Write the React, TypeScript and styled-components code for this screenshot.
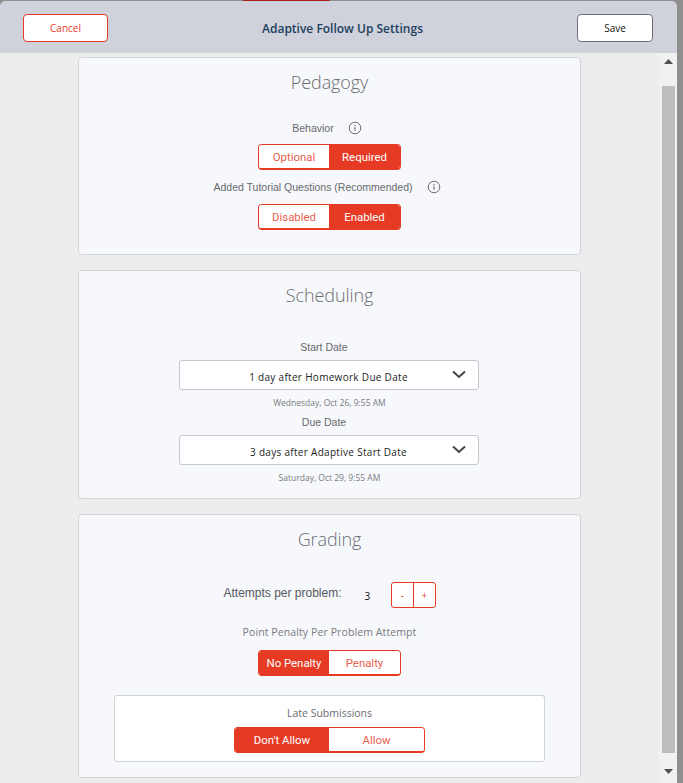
import React from "react";
import styled, { createGlobalStyle } from "styled-components";

const GlobalStyle = createGlobalStyle`
  html, body {
    margin: 0;
    padding: 0;
    height: 783px;
    overflow: hidden;
    background: #8f8f8f;
    font-family: "Liberation Sans", Arial, sans-serif;
  }
`;

const RED = "#e73a25";

const TopStrip = styled.div`
  height: 1px;
  padding-left: 243px;
`;

const StripMark = styled.div`
  width: 87px;
  height: 1px;
  background: #a8201a;
`;

const Modal = styled.div`
  width: 677px;
  height: 782px;
  border-radius: 6px 6px 0 0;
  overflow: hidden;
  display: flex;
  flex-direction: column;
  background: #ededed;
`;

const Header = styled.header`
  flex: none;
  height: 52px;
  box-sizing: border-box;
  background: #cfd2db;
  display: flex;
  align-items: center;
  justify-content: space-between;
  padding: 2px 24px 0 18px;
`;

const Title = styled.h1`
  margin: 0;
  font-family: "Open Sans", sans-serif;
  font-size: 12px;
  font-weight: 600;
  color: #22405f;
`;

const HeaderButton = styled.button<{ $danger?: boolean }>`
  height: 28px;
  box-sizing: border-box;
  width: ${(p) => (p.$danger ? "85px" : "76px")};
  margin-left: ${(p) => (p.$danger ? "5px" : "0")};
  background: #fff;
  border: 1px solid ${(p) => (p.$danger ? RED : "#6f6f78")};
  border-radius: 4px;
  color: ${(p) => (p.$danger ? RED : "#111")};
  font-family: "Open Sans", sans-serif;
  font-size: 10px;
  padding: 0;
`;

const Body = styled.div`
  flex: 1;
  display: flex;
  min-height: 0;
`;

const Content = styled.main`
  flex: 1;
  box-sizing: border-box;
  padding: 4px 0 0 78px;
  display: flex;
  flex-direction: column;
  gap: 15px;
`;

const Card = styled.section<{ $height: number }>`
  width: 503px;
  height: ${(p) => p.$height}px;
  box-sizing: border-box;
  background: #f7f8fb;
  border: 1px solid #cfd3da;
  border-radius: 4px;
  display: flex;
  flex-direction: column;
  align-items: center;
`;

const CardTitle = styled.h2`
  margin: 13px 0 0;
  height: 22px;
  line-height: 22px;
  font-family: "Open Sans", sans-serif;
  font-size: 18px;
  font-weight: 300;
  letter-spacing: -0.1px;
  color: #6b6e73;
`;

const LabelRow = styled.div<{ $top: number; $shift?: number }>`
  margin-top: ${(p) => p.$top}px;
  margin-left: ${(p) => p.$shift ?? 0}px;
  display: flex;
  align-items: center;
  gap: 14px;
  height: 14px;
`;

const FieldLabel = styled.span`
  font-family: "Liberation Sans", Arial, sans-serif;
  font-size: 10.5px;
  color: #66696e;
`;

const InfoIcon = () => (
  <svg width="14" height="14" viewBox="0 0 14 14" fill="none" stroke="#6d6f73" strokeWidth="1">
    <circle cx="7" cy="7" r="5.8" />
    <path d="M7 6.2v3.6" strokeWidth="1.2" />
    <path d="M7 4v1.2" strokeWidth="1.2" />
  </svg>
);

const Toggle = styled.div<{ $top: number; $wide?: boolean }>`
  margin-top: ${(p) => p.$top}px;
  width: ${(p) => (p.$wide ? "191px" : "143px")};
  height: 26px;
  box-sizing: border-box;
  border: 1px solid ${RED};
  border-bottom-width: 2px;
  border-radius: 4px;
  overflow: hidden;
  display: grid;
  grid-template-columns: ${(p) => (p.$wide ? "94px 1fr" : "70px 1fr")};
  background: #fff;
`;

const ToggleOption = styled.div<{ $active?: boolean }>`
  display: flex;
  align-items: center;
  justify-content: center;
  background: ${(p) => (p.$active ? RED : "#fff")};
  color: ${(p) => (p.$active ? "#fff" : "#e8604f")};
  font-family: Roboto, sans-serif;
  font-size: 11.4px;
`;

const SelectBox = styled.div<{ $top: number }>`
  margin-top: ${(p) => p.$top}px;
  margin-right: 2px;
  width: 300px;
  height: 30px;
  box-sizing: border-box;
  background: #fff;
  border: 1px solid #c4c8d0;
  border-radius: 3px;
  position: relative;
  display: flex;
  align-items: center;
  justify-content: center;
  padding: 4px 0 0 0;
  font-family: "Open Sans", sans-serif;
  font-size: 10px;
  letter-spacing: 0.3px;
  color: #1c1c1c;
`;

const Chevron = styled.svg`
  position: absolute;
  right: 12px;
  top: 9px;
`;

const DateHint = styled.div`
  margin-top: 6px;
  height: 14px;
  line-height: 14px;
  font-family: "Open Sans", sans-serif;
  font-size: 8.5px;
  color: #777a80;
`;

const AttemptsRow = styled.div`
  margin-top: 32px;
  display: flex;
  align-items: center;
  height: 26px;
`;

const AttemptsLabel = styled.span`
  font-family: "Liberation Sans", Arial, sans-serif;
  font-size: 12px;
  color: #54585f;
  margin-bottom: 5px;
`;

const AttemptsValue = styled.span`
  margin: 2px 0 0 23px;
  width: 26px;
  font-family: "Open Sans", sans-serif;
  font-size: 10px;
  color: #111;
`;

const Stepper = styled.div`
  width: 45px;
  height: 26px;
  box-sizing: border-box;
  border: 1px solid ${RED};
  border-radius: 3px;
  display: grid;
  grid-template-columns: 1fr 1fr;
  background: #fff;
`;

const StepButton = styled.div`
  display: flex;
  align-items: center;
  justify-content: center;
  color: ${RED};
  font-family: "Open Sans", sans-serif;
  font-size: 10px;
  & + & {
    border-left: 1px solid ${RED};
  }
`;

const PenaltyLabel = styled.div`
  margin-top: 16px;
  height: 16px;
  line-height: 16px;
  font-family: "Open Sans", sans-serif;
  font-size: 10.5px;
  letter-spacing: 0.1px;
  color: #777a80;
`;

const LatePanel = styled.div`
  margin-top: 19px;
  width: 431px;
  height: 67px;
  box-sizing: border-box;
  background: #fff;
  border: 1px solid #cfd3da;
  border-radius: 3px;
  display: flex;
  flex-direction: column;
  align-items: center;
`;

const LateTitle = styled.div`
  margin-top: 10px;
  height: 14px;
  line-height: 14px;
  font-family: "Open Sans", sans-serif;
  font-size: 10.5px;
  color: #6a6d73;
`;

const Scrollbar = styled.aside`
  flex: none;
  width: 18px;
  background: #f1f1f1;
  display: flex;
  flex-direction: column;
  align-items: center;
  box-sizing: border-box;
  padding-top: 6px;
`;

const ArrowButton = styled.svg`
  flex: none;
  display: block;
`;

const ScrollThumb = styled.div`
  width: 13px;
  height: 667px;
  margin: 22px 0 16px;
  background: #bdbdbd;
`;

const App: React.FC = () => {
  return (
    <>
      <GlobalStyle />
      <TopStrip>
        <StripMark />
      </TopStrip>
      <Modal>
        <Header>
          <HeaderButton $danger>Cancel</HeaderButton>
          <Title>Adaptive Follow Up Settings</Title>
          <HeaderButton>Save</HeaderButton>
        </Header>
        <Body>
          <Content>
            <Card $height={198}>
              <CardTitle>Pedagogy</CardTitle>
              <LabelRow $top={28} $shift={-5}>
                <FieldLabel>Behavior</FieldLabel>
                <InfoIcon />
              </LabelRow>
              <Toggle $top={9}>
                <ToggleOption>Optional</ToggleOption>
                <ToggleOption $active>Required</ToggleOption>
              </Toggle>
              <LabelRow $top={10} $shift={-5}>
                <FieldLabel>Added Tutorial Questions (Recommended)</FieldLabel>
                <InfoIcon />
              </LabelRow>
              <Toggle $top={10}>
                <ToggleOption>Disabled</ToggleOption>
                <ToggleOption $active>Enabled</ToggleOption>
              </Toggle>
            </Card>
            <Card $height={229}>
              <CardTitle>Scheduling</CardTitle>
              <LabelRow $top={34} $shift={-11}>
                <FieldLabel>Start Date</FieldLabel>
              </LabelRow>
              <SelectBox $top={6}>
                1 day after Homework Due Date
                <Chevron width="14" height="9" viewBox="0 0 14 9" fill="none" stroke="#444" strokeWidth="2">
                  <path d="M1 1.5l6 5.5 6-5.5" />
                </Chevron>
              </SelectBox>
              <DateHint>Wednesday, Oct 26, 9:55 AM</DateHint>
              <LabelRow $top={5} $shift={-11}>
                <FieldLabel>Due Date</FieldLabel>
              </LabelRow>
              <SelectBox $top={6}>
                3 days after Adaptive Start Date
                <Chevron width="14" height="9" viewBox="0 0 14 9" fill="none" stroke="#444" strokeWidth="2">
                  <path d="M1 1.5l6 5.5 6-5.5" />
                </Chevron>
              </SelectBox>
              <DateHint>Saturday, Oct 29, 9:55 AM</DateHint>
            </Card>
            <Card $height={264}>
              <CardTitle>Grading</CardTitle>
              <AttemptsRow>
                <AttemptsLabel>Attempts per problem:</AttemptsLabel>
                <AttemptsValue>3</AttemptsValue>
                <Stepper>
                  <StepButton>-</StepButton>
                  <StepButton>+</StepButton>
                </Stepper>
              </AttemptsRow>
              <PenaltyLabel>Point Penalty Per Problem Attempt</PenaltyLabel>
              <Toggle $top={10}>
                <ToggleOption $active>No Penalty</ToggleOption>
                <ToggleOption>Penalty</ToggleOption>
              </Toggle>
              <LatePanel>
                <LateTitle>Late Submissions</LateTitle>
                <Toggle $top={7} $wide>
                  <ToggleOption $active>Don't Allow</ToggleOption>
                  <ToggleOption>Allow</ToggleOption>
                </Toggle>
              </LatePanel>
            </Card>
          </Content>
          <Scrollbar>
            <ArrowButton width="9" height="5" viewBox="0 0 9 5" fill="#505050">
              <path d="M4.5 0L9 5H0z" />
            </ArrowButton>
            <ScrollThumb />
            <ArrowButton width="9" height="5" viewBox="0 0 9 5" fill="#505050">
              <path d="M0 0h9L4.5 5z" />
            </ArrowButton>
          </Scrollbar>
        </Body>
      </Modal>
    </>
  );
};

export default App;
